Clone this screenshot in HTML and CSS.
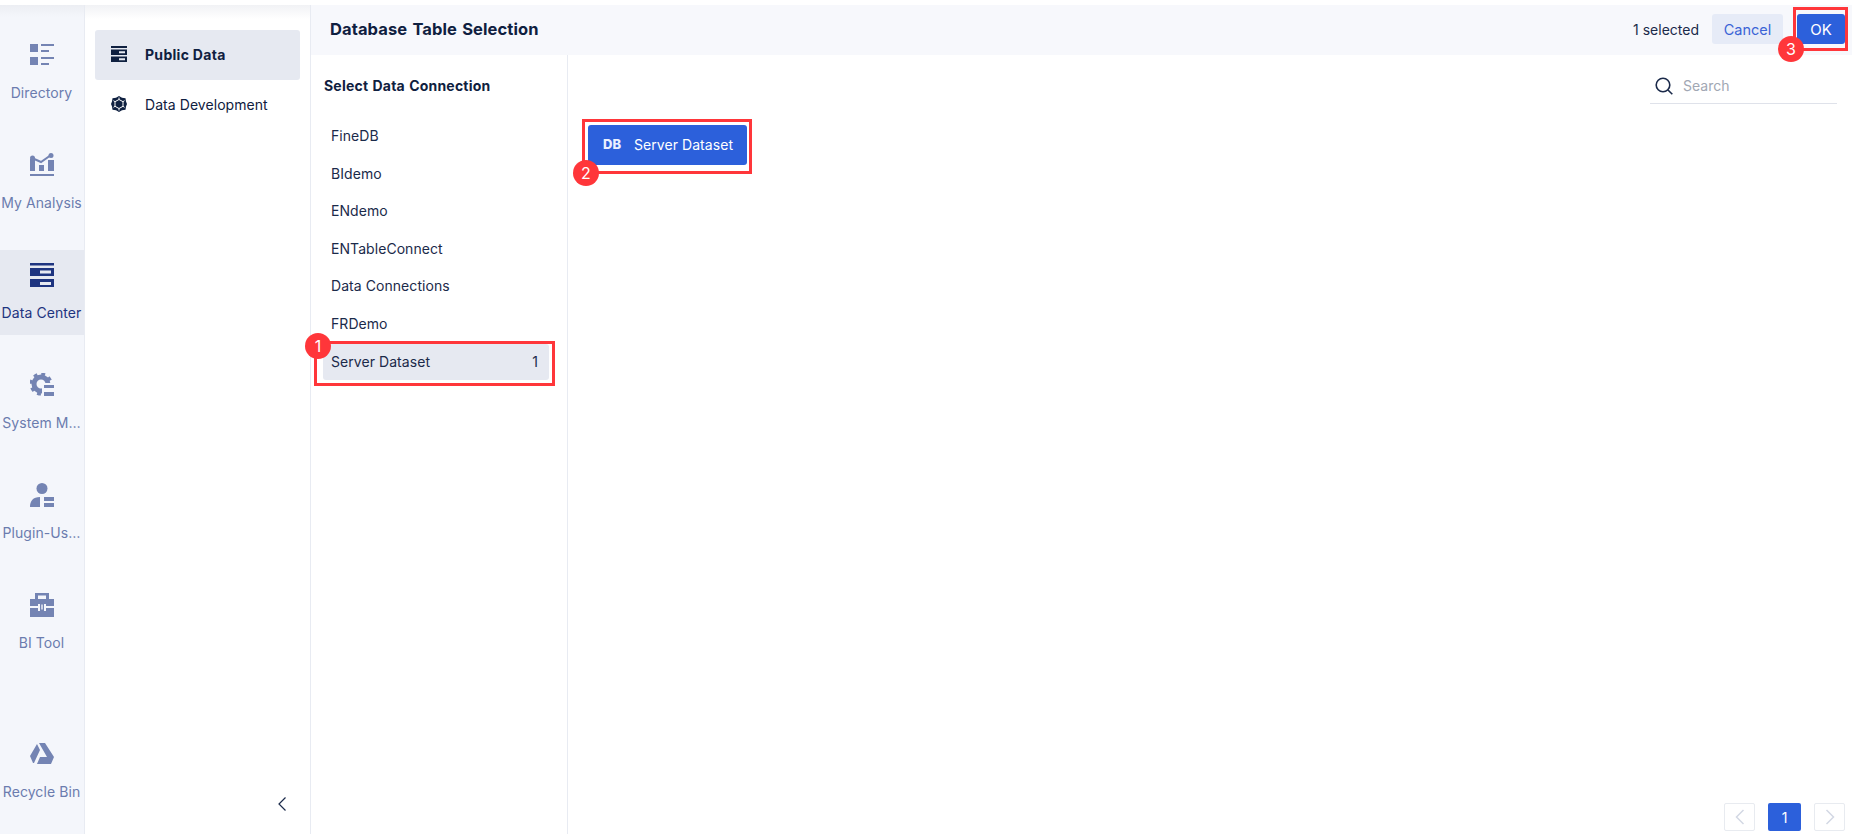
FILE: index.html
```html
<!DOCTYPE html>
<html lang="en">
<head>
<meta charset="utf-8">
<title>Database Table Selection</title>
<link rel="stylesheet" href="styles.css">
</head>
<body>
<div class="topstrip"></div>
<div class="app">
  <nav class="rail">
    <div class="rail-main">
      <a class="rail-item">
        <svg class="rail-icon" viewBox="0 0 24 24"><path d="M0 1h8v8H0zM0 14h8v8H0zM11 1h13v2H11zM11 7h8v2h-8zM11 14h13v2H11zM11 20h8v2h-8z"/></svg>
        <span class="rail-label">Directory</span>
      </a>
      <a class="rail-item">
        <svg class="rail-icon" viewBox="0 0 24 24"><path d="M0 6h5v12H0zM9 12h5v6H9zM18 7h6v11h-6zM0 21h24v2H0z"/><path class="line" d="M2 5l9 4 10-7"/><circle cx="21" cy="2.500" r="2.500"/><circle cx="2.500" cy="5" r="2.500"/></svg>
        <span class="rail-label">My Analysis</span>
      </a>
      <a class="rail-item active">
        <svg class="rail-icon" viewBox="0 0 24 24"><path d="M0 0h24v2.500H0zM0 5h24v8H0zM0 16h24v8H0z"/><path class="slot" d="M10 7.500h11v3H10zM10 19h11v3H10z"/></svg>
        <span class="rail-label">Data Center</span>
      </a>
      <a class="rail-item">
        <svg class="rail-icon" viewBox="0 0 24 24"><circle class="gear-ring" cx="11" cy="11" r="7"/><circle class="gear-teeth" cx="11" cy="11" r="10" stroke-dasharray="3.800 4.050"/><path class="slot" d="M12 10h12v14H12z"/><path d="M14 12h10v3H14zM14 19h10v4H14z"/></svg>
        <span class="rail-label">System M…</span>
      </a>
      <a class="rail-item">
        <svg class="rail-icon" viewBox="0 0 24 24"><circle cx="12" cy="5.500" r="5.500"/><path d="M0 24c0-6 3-10 10-10v10zM14 14h10v4H14zM14 20h10v4H14z"/></svg>
        <span class="rail-label">Plugin-Us…</span>
      </a>
      <a class="rail-item">
        <svg class="rail-icon" viewBox="0 0 24 24"><path fill-rule="evenodd" d="M5 0h14v6h5v7h-8v-2H8v2H0V6h5zM8 2.500V6h8V2.500zM0 15h8v3h8v-3h8v9H0z"/><path d="M10 10h4v8h-4z"/><path class="slot" d="M11.300 11.500h1.400v5h-1.400z"/></svg>
        <span class="rail-label">BI Tool</span>
      </a>
    </div>
    <a class="rail-item">
      <svg class="rail-icon" viewBox="0 0 24 24"><path d="M9 1h6l9 14h-7zM0 14L7 2l3 6-6 13-1 0zM7 22l3-7h14l-3 7z"/></svg>
      <span class="rail-label">Recycle Bin</span>
    </a>
  </nav>

  <aside class="subnav">
    <a class="subnav-item active">
      <svg class="subnav-icon" viewBox="0 0 16 16"><path d="M0 0h16v2H0zM0 3.500h16V9H0zM0 10.500h16V16H0z"/><path class="slot" d="M8 5.200h6v2H8zM8 12.200h6v2H8z"/></svg>
      <span>Public Data</span>
    </a>
    <a class="subnav-item">
      <svg class="subnav-icon" viewBox="0 0 16 16"><path d="M8 0l3 1.800 3.500.4.500 3.300 1 2.500-1 2.500-.5 3.300-3.500.4L8 16l-3-1.800-3.500-.4L1 10.500 0 8l1-2.500.5-3.300L5 1.800z"/><path class="hex" d="M8 3.500l4 2.200v4.600l-4 2.200-4-2.200V5.700zM8 3.500V1.500M12 5.700l1.500-1M12 10.300l1.500 1M8 12.500v2M4 10.300l-1.500 1M4 5.700l-1.500-1"/><circle cx="8" cy="8" r="2"/></svg>
      <span>Data Development</span>
    </a>
    <div class="subnav-foot">
      <svg class="collapse" viewBox="0 0 8 14"><path d="M7.500.5L1 7l6.500 6.500"/></svg>
    </div>
  </aside>

  <main class="main">
    <header class="head">
      <h1 class="title">Database Table Selection</h1>
      <div class="head-actions">
        <span class="count">1 selected</span>
        <button class="btn btn-cancel">Cancel</button>
        <button class="btn btn-ok">OK
          <span class="mark mark-ok"></span>
          <span class="badge badge-3">3</span>
        </button>
      </div>
    </header>
    <div class="body">
      <section class="conn">
        <h2 class="conn-title">Select Data Connection</h2>
        <ul class="conn-list">
          <li class="conn-item">FineDB</li>
          <li class="conn-item">BIdemo</li>
          <li class="conn-item">ENdemo</li>
          <li class="conn-item">ENTableConnect</li>
          <li class="conn-item">Data Connections</li>
          <li class="conn-item">FRDemo</li>
          <li class="conn-item active"><span>Server Dataset</span><span>1</span>
            <span class="mark mark-conn"></span>
            <span class="badge badge-1">1</span>
          </li>
        </ul>
      </section>
      <section class="content">
        <div class="search-row">
          <div class="search">
            <svg class="search-icon" viewBox="0 0 18 18"><circle cx="8" cy="8" r="6.800"/><path d="M13 13l4.300 4.300"/></svg>
            <span>Search</span>
          </div>
        </div>
        <div class="cards">
          <div class="card">
            <span class="db">DB</span><span>Server Dataset</span>
            <span class="mark mark-card"></span>
            <span class="badge badge-2">2</span>
          </div>
        </div>
        <div class="pager">
          <span class="page page-nav"><svg viewBox="0 0 10 16"><path d="M8.500 1L1.500 8l7 7"/></svg></span>
          <span class="page page-on">1</span>
          <span class="page page-nav"><svg viewBox="0 0 10 16"><path d="M1.500 1l7 7-7 7"/></svg></span>
        </div>
      </section>
    </div>
  </main>
</div>
</body>
</html>
```
FILE: styles.css
```css
* { box-sizing: border-box; }
html, body { margin: 0; height: 100%; }
body {
  width: 1852px;
  height: 834px;
  overflow: hidden;
  background: #fff;
  font-family: Inter, "Liberation Sans", sans-serif;
  font-size: 14px;
  color: #1b2a4a;
  display: flex;
  flex-direction: column;
}
.topstrip { height: 5px; background: #fff; flex: none; }
.app { flex: 1; display: flex; min-height: 0; }

/* Left rail */
.rail {
  width: 85px;
  flex: none;
  background: linear-gradient(#eceef3, #f4f6fb 12px);
  border-right: 1px solid #e8ebf2;
  display: flex;
  flex-direction: column;
  padding: 25px 0 20px;
}
.rail-main { flex: 1; display: flex; flex-direction: column; gap: 25px; }
.rail-item {
  height: 85px;
  display: flex;
  flex-direction: column;
  align-items: center;
  padding-top: 13px;
  color: #6b7cae;
  flex: none;
}
.rail-icon { width: 24px; height: 24px; fill: #7484b3; flex: none; }
.rail-icon .line { fill: none; stroke: #7484b3; stroke-width: 2; }
.rail-icon .gear-ring { fill: none; stroke: #7484b3; stroke-width: 5; }
.rail-icon .gear-teeth { fill: none; stroke: #7484b3; stroke-width: 3; }
.rail-icon .slot { fill: #f4f6fb; }
.rail-label {
  margin-top: 15px;
  width: 84px;
  padding-right: 1px;
  font-size: 14px;
  letter-spacing: .08px;
  line-height: 22px;
  text-align: center;
  white-space: nowrap;
}
.rail-item.active { background: #e6e9f1; color: #1e3480; }
.rail-item.active .rail-icon { fill: #1e3480; }
.rail-item.active .rail-icon .slot { fill: #e6e9f1; }

/* Second panel */
.subnav {
  width: 226px;
  flex: none;
  background: linear-gradient(#f1f2f5, #fff 14px);
  border-right: 1px solid #e8ebf2;
  display: flex;
  flex-direction: column;
  padding: 25px 10px 0;
}
.subnav-item {
  height: 50px;
  flex: none;
  display: flex;
  align-items: center;
  gap: 18px;
  padding: 0 0 2px 16px;
  border-radius: 3px;
  color: #0f2040;
  letter-spacing: .06px;
}
.subnav-item.active { background: #e6e9f1; font-weight: 700; letter-spacing: .3px; }
.subnav-icon { width: 16px; height: 16px; fill: #0f2040; flex: none; }
.subnav-icon .slot { fill: #e6e9f1; }
.subnav-icon .hex { fill: none; stroke: #fff; stroke-width: 1; }
.subnav-foot { flex: 1; display: flex; align-items: flex-end; justify-content: flex-end; padding: 0 14px 23px 0; }
.collapse { width: 8px; height: 14px; fill: none; stroke: #1b2a4a; stroke-width: 1.200; }

/* Main */
.main { flex: 1; min-width: 0; display: flex; flex-direction: column; }
.head {
  height: 50px;
  flex: none;
  background: #f7f8fc;
  display: flex;
  align-items: center;
  justify-content: space-between;
  padding: 0 7px 2px 19px;
}
.title { margin: 0; font-size: 16.500px; word-spacing: 1.200px; letter-spacing: .1px; font-weight: 700; color: #0f2040; }
.head-actions { display: flex; align-items: center; }
.count { margin-right: 13px; color: #1b2a4a; }
.btn {
  position: relative;
  height: 30px;
  border: 0;
  border-radius: 3px;
  padding: 0;
  font: inherit;
  font-size: 14.500px;
}
.btn-cancel { width: 71px; background: #e6ebf7; color: #3a63d6; margin-right: 14px; }
.btn-ok { width: 48px; background: #2c60db; color: #fff; font-size: 15px; }

.body { flex: 1; min-height: 0; display: flex; }
.conn { width: 257px; flex: none; border-right: 1px solid #e8ebf2; padding: 21px 18px 0 13px; }
.conn-title { margin: 0 0 22px; font-size: 14px; font-weight: 700; letter-spacing: .2px; word-spacing: .8px; line-height: 20px; color: #0f2040; }
.conn-list { list-style: none; margin: 0 0 0 -1px; padding: 0; display: flex; flex-direction: column; gap: 1.600px; }
.conn-item {
  position: relative;
  height: 36px;
  padding: 0 11px 1px 8px;
  display: flex;
  align-items: center;
  justify-content: space-between;
  border-radius: 3px;
  color: #1b2a4a;
  letter-spacing: .06px;
}
.conn-item.active { background: #e6e9f1; }

.content { flex: 1; min-width: 0; display: flex; flex-direction: column; padding: 0 7px 3px 20px; }
.search-row { height: 49px; padding-right: 8px; display: flex; justify-content: flex-end; flex: none; }
.search {
  margin-top: 13px;
  width: 187px;
  height: 36px;
  border-bottom: 1px solid #dfe2ea;
  display: flex;
  align-items: center;
  gap: 10px;
  padding-left: 5px;
  color: #a1a7b3;
}
.search-icon { width: 18px; height: 18px; fill: none; stroke: #1b2a4a; stroke-width: 1.600; }
.cards { flex: 1; padding-top: 21px; }
.card {
  position: relative;
  width: 159px;
  height: 40px;
  background: #2c60db;
  border-radius: 3px;
  color: #fff;
  display: flex;
  align-items: center;
  padding: 0 0 2px 15px;
  letter-spacing: .06px;
}
.db { font-size: 13px; font-weight: 800; width: 31px; letter-spacing: 0; color: #eaf0ff; }
.pager { display: flex; justify-content: flex-end; gap: 13px; flex: none; }
.page {
  height: 28px;
  display: flex;
  align-items: center;
  justify-content: center;
  border-radius: 2px;
}
.page-nav { width: 31px; border: 1px solid #e8ebf0; }
.page-nav svg { width: 10px; height: 16px; fill: none; stroke: #d3d8e4; stroke-width: 1.500; }
.page-on { width: 33px; background: #2c60db; color: #fff; }

/* Annotations over the screenshot */
.mark { position: absolute; border: 3px solid #ff363a; pointer-events: none; }
.mark-conn { left: -9px; right: -6px; top: -3px; bottom: -6px; }
.mark-card { left: -6px; right: -5px; top: -6px; bottom: -9px; }
.mark-ok { left: -4px; right: -3px; top: -7px; bottom: -7px; }
.badge {
  position: absolute;
  width: 26px;
  height: 26px;
  border-radius: 50%;
  background: #ff363a;
  color: #fff;
  font-size: 16px;
  letter-spacing: 0;
  line-height: 26px;
  text-align: center;
}
.badge-1 { left: -18px; top: -11px; }
.badge-2 { left: -15px; top: 35px; }
.badge-3 { left: -19px; top: 22px; }
```
